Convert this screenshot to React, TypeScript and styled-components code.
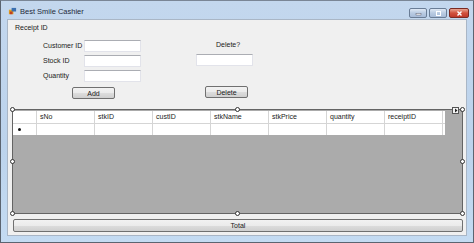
import React from "react";
import styled, { createGlobalStyle } from "styled-components";

const GlobalStyle = createGlobalStyle`
  html, body {
    margin: 0;
    padding: 0;
    background: #ffffff;
  }
  body {
    font-family: "Liberation Sans", Arial, sans-serif;
    font-size: 7px;
    color: #1a1a1a;
  }
`;

const columns = ["sNo", "stkID", "custID", "stkName", "stkPrice", "quantity", "receiptID"];

const App = () => {
  return (
    <>
      <GlobalStyle />
      <Frame>
        <TitleBar>
          <TitleLeft>
            <AppIcon viewBox="0 0 10 10">
              <rect x="1" y="3" width="5" height="5" fill="#e0a020" />
              <rect x="4" y="1" width="5" height="4" fill="#3a6fb0" />
              <rect x="2" y="5" width="3" height="3" fill="#c04020" />
            </AppIcon>
            <TitleText>Best Smile Cashier</TitleText>
          </TitleLeft>
          <Controls>
            <CtrlButton>
              <svg width="7" height="5" viewBox="0 0 7 5">
                <rect x="1" y="2.5" width="5" height="1.5" fill="#fff" stroke="#445" strokeWidth="0.4" />
              </svg>
            </CtrlButton>
            <CtrlButton>
              <svg width="7" height="5" viewBox="0 0 7 5">
                <rect x="1.5" y="0.5" width="4" height="4" fill="none" stroke="#fff" strokeWidth="1" />
              </svg>
            </CtrlButton>
            <CloseButton>
              <svg width="7" height="5" viewBox="0 0 7 5">
                <path d="M1.5 0.5 L5.5 4.5 M5.5 0.5 L1.5 4.5" stroke="#fff" strokeWidth="1.4" />
              </svg>
            </CloseButton>
          </Controls>
        </TitleBar>
        <Client>
          <ReceiptLabel>Receipt ID</ReceiptLabel>
          <FormArea>
            <FieldColumn>
              <FieldRow>
                <Label>Customer ID</Label>
                <TextBox />
              </FieldRow>
              <FieldRow>
                <Label>Stock ID</Label>
                <TextBox />
              </FieldRow>
              <FieldRow>
                <Label>Quantity</Label>
                <TextBox />
              </FieldRow>
              <ButtonRow $indent={59} $top={3}>
                <WinButton>Add</WinButton>
              </ButtonRow>
            </FieldColumn>
            <DeleteColumn>
              <DeleteLabel>Delete?</DeleteLabel>
              <TextBox />
              <ButtonRow $indent={9} $top={20}>
                <WinButton>Delete</WinButton>
              </ButtonRow>
            </DeleteColumn>
          </FormArea>
          <GridWrap>
            <Grid>
              <HeaderRow>
                <RowHead />
                {columns.map((c) => (
                  <HeadCell key={c}>{c}</HeadCell>
                ))}
              </HeaderRow>
              <DataRow>
                <RowHead>
                  <Bullet />
                </RowHead>
                {columns.map((c) => (
                  <Cell key={c} />
                ))}
              </DataRow>
            </Grid>
            <SmartTag>
              <svg width="4" height="5" viewBox="0 0 4 5">
                <path d="M1 0.5 L3.5 2.5 L1 4.5 Z" fill="#222" />
              </svg>
            </SmartTag>
            <Handle style={{ left: -3, top: -3 }} />
            <Handle style={{ left: "calc(50% - 3px)", top: -3 }} />
            <Handle style={{ right: -3, top: -3 }} />
            <Handle style={{ left: -3, top: "calc(50% - 3px)" }} />
            <Handle style={{ right: -3, top: "calc(50% - 3px)" }} />
            <Handle style={{ left: -3, bottom: -3 }} />
            <Handle style={{ left: "calc(50% - 3px)", bottom: -3 }} />
            <Handle style={{ right: -3, bottom: -3 }} />
          </GridWrap>
          <TotalButton>Total</TotalButton>
        </Client>
      </Frame>
    </>
  );
};

export default App;

const Frame = styled.div`
  width: 474px;
  height: 243px;
  box-sizing: border-box;
  background: linear-gradient(180deg, #c3d7ee 0%, #bcd3ec 60%, #c4dbf2 100%);
  border: 1px solid #5b6470;
  border-top-color: #7a8696;
  padding: 0 6px 6px 6px;
  display: flex;
  flex-direction: column;
  overflow: hidden;
`;

const TitleBar = styled.div`
  height: 18px;
  flex-shrink: 0;
  display: flex;
  align-items: center;
  justify-content: space-between;
`;

const TitleLeft = styled.div`
  display: flex;
  align-items: center;
  gap: 3px;
  padding-top: 2px;
  padding-left: 1px;
`;

const AppIcon = styled.svg`
  width: 9px;
  height: 9px;
`;

const TitleText = styled.span`
  font-size: 7.5px;
  color: #1e2a3a;
`;

const Controls = styled.div`
  display: flex;
  gap: 2px;
  align-self: flex-end;
  margin-bottom: 1px;
  margin-right: -2px;
`;

const CtrlButton = styled.div`
  width: 16px;
  height: 8px;
  border: 1px solid #6a7d96;
  border-radius: 2px;
  background: linear-gradient(180deg, #dfe8f4 0%, #b9cbe2 50%, #a8bcd8 100%);
  display: flex;
  align-items: center;
  justify-content: center;
`;

const CloseButton = styled(CtrlButton)`
  width: 18px;
  border-color: #7a2a22;
  background: linear-gradient(180deg, #e8a593 0%, #d1513d 50%, #c0392a 100%);
`;

const Client = styled.div`
  flex: 1;
  min-height: 0;
  background: #f0f0f0;
  border: 1px solid #a9b6c6;
  display: flex;
  flex-direction: column;
  padding: 3px 3px 0 4px;
  position: relative;
`;

const ReceiptLabel = styled.div`
  padding-left: 3px;
  height: 10px;
  line-height: 10px;
  flex-shrink: 0;
`;

const FormArea = styled.div`
  display: flex;
  padding-top: 6px;
  padding-left: 1px;
  flex-shrink: 0;
`;

const FieldColumn = styled.div`
  display: flex;
  flex-direction: column;
  gap: 2px;
  width: 183px;
`;

const FieldRow = styled.div`
  display: flex;
  align-items: center;
  height: 13px;
`;

const Label = styled.div`
  width: 41px;
  padding-left: 30px;
`;

const TextBox = styled.div`
  width: 57px;
  height: 12px;
  background: #ffffff;
  border: 1px solid #e2e3ea;
  border-top-color: #abadb3;
  box-sizing: border-box;
`;

const ButtonRow = styled.div<{ $indent: number; $top: number }>`
  padding-left: ${(p) => p.$indent}px;
  margin-top: ${(p) => p.$top}px;
`;

const WinButton = styled.div`
  width: 43px;
  height: 12px;
  box-sizing: border-box;
  border: 1px solid #707070;
  border-radius: 2px;
  background: linear-gradient(180deg, #f2f2f2 0%, #ebebeb 50%, #dddddd 51%, #cfcfcf 100%);
  display: flex;
  align-items: center;
  justify-content: center;
  flex-shrink: 0;
`;

const DeleteColumn = styled.div`
  display: flex;
  flex-direction: column;
`;

const DeleteLabel = styled.div`
  height: 10px;
  line-height: 10px;
  padding-left: 20px;
  margin-top: 1px;
  margin-bottom: 4px;
`;

const GridWrap = styled.div`
  position: relative;
  flex-shrink: 0;
  margin-top: 10px;
  height: 105px;
  width: 451px;
  box-sizing: border-box;
  background: #ababab;
  border: 1px solid #646464;
`;

const Grid = styled.div`
  display: flex;
  flex-direction: column;
  width: 432px;
`;

const HeaderRow = styled.div`
  display: flex;
  height: 12px;
  margin-top: 1px;
  background: #ffffff;
  border-bottom: 1px solid #d5d5d5;
`;

const DataRow = styled.div`
  display: flex;
  height: 11px;
  background: #ffffff;
`;

const RowHead = styled.div`
  width: 24px;
  flex-shrink: 0;
  border-right: 1px solid #d5d5d5;
  display: flex;
  align-items: center;
  padding-left: 5px;
  box-sizing: border-box;
`;

const Bullet = styled.div`
  width: 3px;
  height: 3px;
  border-radius: 50%;
  background: #111;
`;

const HeadCell = styled.div`
  width: 58px;
  flex-shrink: 0;
  border-right: 1px solid #d5d5d5;
  box-sizing: border-box;
  padding-left: 3px;
  line-height: 12px;
`;

const Cell = styled.div`
  width: 58px;
  flex-shrink: 0;
  border-right: 1px solid #d5d5d5;
  box-sizing: border-box;
`;

const Handle = styled.div`
  position: absolute;
  width: 5px;
  height: 5px;
  border-radius: 50%;
  border: 1px solid #333;
  background: #ffffff;
  box-sizing: border-box;
`;

const SmartTag = styled.div`
  position: absolute;
  right: 3px;
  top: -3px;
  width: 7px;
  height: 7px;
  box-sizing: border-box;
  border: 1px solid #555;
  background: #f4f4f4;
  display: flex;
  align-items: center;
  justify-content: center;
`;

const TotalButton = styled(WinButton)`
  width: 450px;
  height: 13px;
  margin-top: 5px;
  margin-left: 1px;
`;
